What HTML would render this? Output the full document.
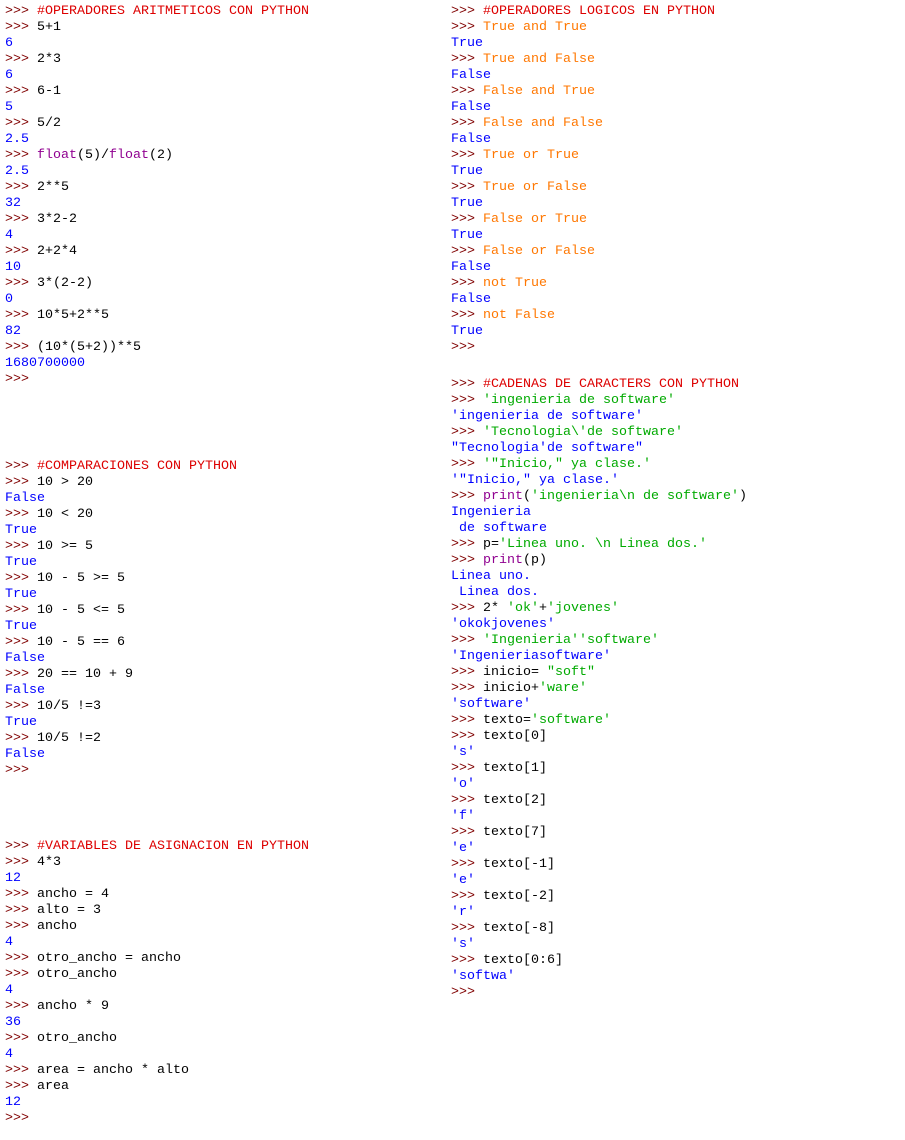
<!DOCTYPE html>
<html><head><meta charset="utf-8"><style>
body{margin:0;width:905px;height:1140px;background:#fff;overflow:hidden;position:relative}
pre{position:absolute;margin:0;font-family:"Liberation Mono",monospace;font-size:13.33px;line-height:16px;color:#000}
.p{color:#800000}.c{color:#dd0000}.o{color:#0000ff}.s{color:#00aa00}.k{color:#ff7700}.b{color:#900090}
</style></head><body>
<pre style="left:5px;top:4px"><span class="p">&gt;&gt;&gt; </span><span class="c">#OPERADORES ARITMETICOS CON PYTHON</span>
<span class="p">&gt;&gt;&gt; </span>5+1
<span class="o">6</span>
<span class="p">&gt;&gt;&gt; </span>2*3
<span class="o">6</span>
<span class="p">&gt;&gt;&gt; </span>6-1
<span class="o">5</span>
<span class="p">&gt;&gt;&gt; </span>5/2
<span class="o">2.5</span>
<span class="p">&gt;&gt;&gt; </span><span class="b">float</span>(5)/<span class="b">float</span>(2)
<span class="o">2.5</span>
<span class="p">&gt;&gt;&gt; </span>2**5
<span class="o">32</span>
<span class="p">&gt;&gt;&gt; </span>3*2-2
<span class="o">4</span>
<span class="p">&gt;&gt;&gt; </span>2+2*4
<span class="o">10</span>
<span class="p">&gt;&gt;&gt; </span>3*(2-2)
<span class="o">0</span>
<span class="p">&gt;&gt;&gt; </span>10*5+2**5
<span class="o">82</span>
<span class="p">&gt;&gt;&gt; </span>(10*(5+2))**5
<span class="o">1680700000</span>
<span class="p">&gt;&gt;&gt;</span></pre>
<pre style="left:5px;top:459px"><span class="p">&gt;&gt;&gt; </span><span class="c">#COMPARACIONES CON PYTHON</span>
<span class="p">&gt;&gt;&gt; </span>10 &gt; 20
<span class="o">False</span>
<span class="p">&gt;&gt;&gt; </span>10 &lt; 20
<span class="o">True</span>
<span class="p">&gt;&gt;&gt; </span>10 &gt;= 5
<span class="o">True</span>
<span class="p">&gt;&gt;&gt; </span>10 - 5 &gt;= 5
<span class="o">True</span>
<span class="p">&gt;&gt;&gt; </span>10 - 5 &lt;= 5
<span class="o">True</span>
<span class="p">&gt;&gt;&gt; </span>10 - 5 == 6
<span class="o">False</span>
<span class="p">&gt;&gt;&gt; </span>20 == 10 + 9
<span class="o">False</span>
<span class="p">&gt;&gt;&gt; </span>10/5 !=3
<span class="o">True</span>
<span class="p">&gt;&gt;&gt; </span>10/5 !=2
<span class="o">False</span>
<span class="p">&gt;&gt;&gt;</span></pre>
<pre style="left:5px;top:839px"><span class="p">&gt;&gt;&gt; </span><span class="c">#VARIABLES DE ASIGNACION EN PYTHON</span>
<span class="p">&gt;&gt;&gt; </span>4*3
<span class="o">12</span>
<span class="p">&gt;&gt;&gt; </span>ancho = 4
<span class="p">&gt;&gt;&gt; </span>alto = 3
<span class="p">&gt;&gt;&gt; </span>ancho
<span class="o">4</span>
<span class="p">&gt;&gt;&gt; </span>otro_ancho = ancho
<span class="p">&gt;&gt;&gt; </span>otro_ancho
<span class="o">4</span>
<span class="p">&gt;&gt;&gt; </span>ancho * 9
<span class="o">36</span>
<span class="p">&gt;&gt;&gt; </span>otro_ancho
<span class="o">4</span>
<span class="p">&gt;&gt;&gt; </span>area = ancho * alto
<span class="p">&gt;&gt;&gt; </span>area
<span class="o">12</span>
<span class="p">&gt;&gt;&gt;</span></pre>
<pre style="left:451px;top:4px"><span class="p">&gt;&gt;&gt; </span><span class="c">#OPERADORES LOGICOS EN PYTHON</span>
<span class="p">&gt;&gt;&gt; </span><span class="k">True and True</span>
<span class="o">True</span>
<span class="p">&gt;&gt;&gt; </span><span class="k">True and False</span>
<span class="o">False</span>
<span class="p">&gt;&gt;&gt; </span><span class="k">False and True</span>
<span class="o">False</span>
<span class="p">&gt;&gt;&gt; </span><span class="k">False and False</span>
<span class="o">False</span>
<span class="p">&gt;&gt;&gt; </span><span class="k">True or True</span>
<span class="o">True</span>
<span class="p">&gt;&gt;&gt; </span><span class="k">True or False</span>
<span class="o">True</span>
<span class="p">&gt;&gt;&gt; </span><span class="k">False or True</span>
<span class="o">True</span>
<span class="p">&gt;&gt;&gt; </span><span class="k">False or False</span>
<span class="o">False</span>
<span class="p">&gt;&gt;&gt; </span><span class="k">not True</span>
<span class="o">False</span>
<span class="p">&gt;&gt;&gt; </span><span class="k">not False</span>
<span class="o">True</span>
<span class="p">&gt;&gt;&gt;</span></pre>
<pre style="left:451px;top:377px"><span class="p">&gt;&gt;&gt; </span><span class="c">#CADENAS DE CARACTERS CON PYTHON</span>
<span class="p">&gt;&gt;&gt; </span><span class="s">'ingenieria de software'</span>
<span class="o">'ingenieria de software'</span>
<span class="p">&gt;&gt;&gt; </span><span class="s">'Tecnologia\'de software'</span>
<span class="o">"Tecnologia'de software"</span>
<span class="p">&gt;&gt;&gt; </span><span class="s">'"Inicio," ya clase.'</span>
<span class="o">'"Inicio," ya clase.'</span>
<span class="p">&gt;&gt;&gt; </span><span class="b">print</span>(<span class="s">'ingenieria\n de software'</span>)
<span class="o">Ingenieria</span>
<span class="o"> de software</span>
<span class="p">&gt;&gt;&gt; </span>p=<span class="s">'Linea uno. \n Linea dos.'</span>
<span class="p">&gt;&gt;&gt; </span><span class="b">print</span>(p)
<span class="o">Linea uno.</span>
<span class="o"> Linea dos.</span>
<span class="p">&gt;&gt;&gt; </span>2* <span class="s">'ok'</span>+<span class="s">'jovenes'</span>
<span class="o">'okokjovenes'</span>
<span class="p">&gt;&gt;&gt; </span><span class="s">'Ingenieria''software'</span>
<span class="o">'Ingenieriasoftware'</span>
<span class="p">&gt;&gt;&gt; </span>inicio= <span class="s">"soft"</span>
<span class="p">&gt;&gt;&gt; </span>inicio+<span class="s">'ware'</span>
<span class="o">'software'</span>
<span class="p">&gt;&gt;&gt; </span>texto=<span class="s">'software'</span>
<span class="p">&gt;&gt;&gt; </span>texto[0]
<span class="o">'s'</span>
<span class="p">&gt;&gt;&gt; </span>texto[1]
<span class="o">'o'</span>
<span class="p">&gt;&gt;&gt; </span>texto[2]
<span class="o">'f'</span>
<span class="p">&gt;&gt;&gt; </span>texto[7]
<span class="o">'e'</span>
<span class="p">&gt;&gt;&gt; </span>texto[-1]
<span class="o">'e'</span>
<span class="p">&gt;&gt;&gt; </span>texto[-2]
<span class="o">'r'</span>
<span class="p">&gt;&gt;&gt; </span>texto[-8]
<span class="o">'s'</span>
<span class="p">&gt;&gt;&gt; </span>texto[0:6]
<span class="o">'softwa'</span>
<span class="p">&gt;&gt;&gt;</span></pre>
</body></html>
